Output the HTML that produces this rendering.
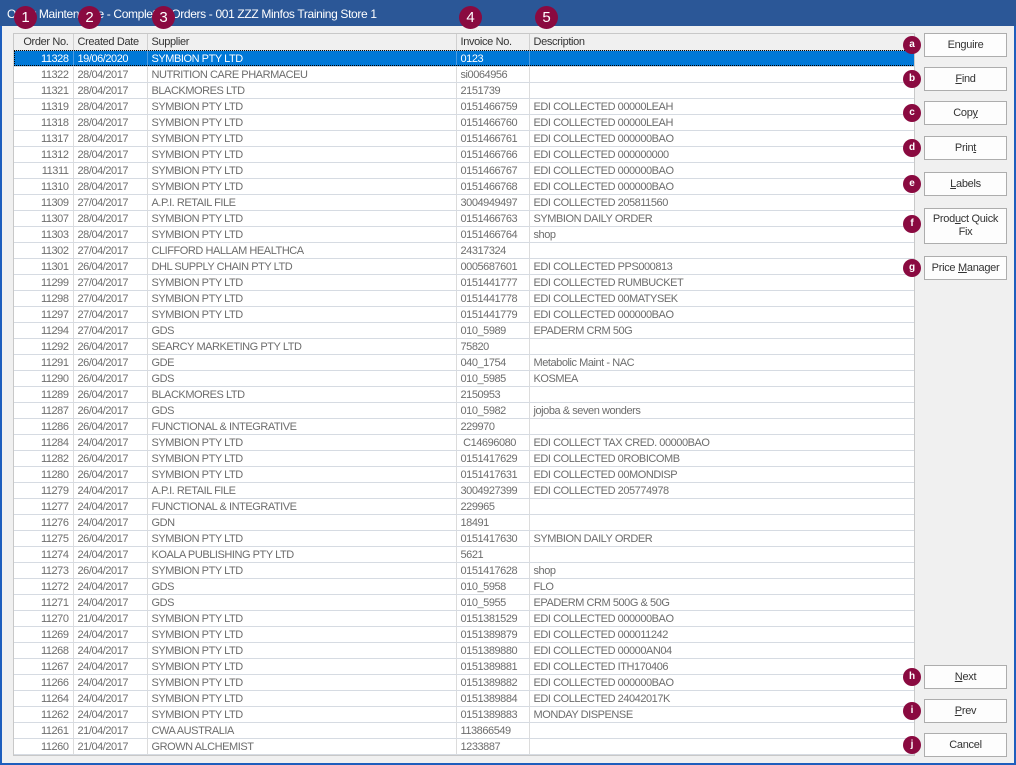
<!DOCTYPE html>
<html><head><style>
*{box-sizing:border-box;margin:0;padding:0}
body{width:1016px;height:765px;overflow:hidden;background:#1e5ebd;font-family:"Liberation Sans",sans-serif;font-size:11px;position:relative}
#title{position:absolute;left:0;top:0;width:1016px;height:26px;background:#2b5797;color:#fff;font-size:12px;letter-spacing:-0.35px;padding:7px 0 0 7px}
#body{position:absolute;left:2px;top:26px;width:1012px;height:737px;background:#f0f0f0}
#grid{position:absolute;left:13px;top:33px;width:902px;height:723px;background:#fff;border:1px solid #c8c8c8;overflow:hidden}
table{border-collapse:collapse;table-layout:fixed;width:901px}
td,th{height:16px;line-height:14px;padding:1px 4px 0 4px;white-space:nowrap;overflow:hidden;color:#6d6d6d;font-weight:normal;text-align:left;border-right:1px solid #dcdcdc;border-bottom:1px solid #d6dbe2;letter-spacing:-0.45px;vertical-align:top}
th{background:#f0f0f0;color:#333;border-bottom:1px solid #c8c8c8;border-right:1px solid #d0d0d0;letter-spacing:-0.35px}
td.n{text-align:right}
tr.sel td{background:#0078d7;color:#fff;border-right-color:#4a9be0}
tr.sel{outline:1px dotted #000;outline-offset:-1px}
.btn{position:absolute;left:924px;width:83px;height:24px;background:#fdfdfd;border:1px solid #adadad;text-align:center;line-height:22px;color:#333;font-size:11px;letter-spacing:-0.3px}
.b{position:absolute;width:18px;height:18px;border-radius:50%;background:#8a0a40;color:#fff;font-weight:bold;font-size:10px;text-align:center;line-height:18px}
.nb{position:absolute;width:23px;height:23px;border-radius:50%;background:#8a0a40;color:#fff;font-size:15px;text-align:center;line-height:23px}
u{text-decoration:underline}
</style></head><body>
<div id="title">Order Maintenance - Completed Orders - 001 ZZZ Minfos Training Store 1</div>
<div id="body"></div>
<div id="grid"><table>
<colgroup><col style="width:59px"><col style="width:74px"><col style="width:309px"><col style="width:73px"><col></colgroup>
<tr><th style="text-align:right">Order No.</th><th>Created Date</th><th>Supplier</th><th>Invoice No.</th><th>Description</th></tr>
<tr class="sel"><td class="n">11328</td><td>19/06/2020</td><td>SYMBION PTY LTD</td><td>0123</td><td></td></tr>
<tr><td class="n">11322</td><td>28/04/2017</td><td>NUTRITION CARE PHARMACEU</td><td>si0064956</td><td></td></tr>
<tr><td class="n">11321</td><td>28/04/2017</td><td>BLACKMORES LTD</td><td>2151739</td><td></td></tr>
<tr><td class="n">11319</td><td>28/04/2017</td><td>SYMBION PTY LTD</td><td>0151466759</td><td>EDI COLLECTED 00000LEAH</td></tr>
<tr><td class="n">11318</td><td>28/04/2017</td><td>SYMBION PTY LTD</td><td>0151466760</td><td>EDI COLLECTED 00000LEAH</td></tr>
<tr><td class="n">11317</td><td>28/04/2017</td><td>SYMBION PTY LTD</td><td>0151466761</td><td>EDI COLLECTED 000000BAO</td></tr>
<tr><td class="n">11312</td><td>28/04/2017</td><td>SYMBION PTY LTD</td><td>0151466766</td><td>EDI COLLECTED 000000000</td></tr>
<tr><td class="n">11311</td><td>28/04/2017</td><td>SYMBION PTY LTD</td><td>0151466767</td><td>EDI COLLECTED 000000BAO</td></tr>
<tr><td class="n">11310</td><td>28/04/2017</td><td>SYMBION PTY LTD</td><td>0151466768</td><td>EDI COLLECTED 000000BAO</td></tr>
<tr><td class="n">11309</td><td>27/04/2017</td><td>A.P.I. RETAIL FILE</td><td>3004949497</td><td>EDI COLLECTED 205811560</td></tr>
<tr><td class="n">11307</td><td>28/04/2017</td><td>SYMBION PTY LTD</td><td>0151466763</td><td>SYMBION DAILY ORDER</td></tr>
<tr><td class="n">11303</td><td>28/04/2017</td><td>SYMBION PTY LTD</td><td>0151466764</td><td>shop</td></tr>
<tr><td class="n">11302</td><td>27/04/2017</td><td>CLIFFORD HALLAM HEALTHCA</td><td>24317324</td><td></td></tr>
<tr><td class="n">11301</td><td>26/04/2017</td><td>DHL SUPPLY CHAIN PTY LTD</td><td>0005687601</td><td>EDI COLLECTED PPS000813</td></tr>
<tr><td class="n">11299</td><td>27/04/2017</td><td>SYMBION PTY LTD</td><td>0151441777</td><td>EDI COLLECTED RUMBUCKET</td></tr>
<tr><td class="n">11298</td><td>27/04/2017</td><td>SYMBION PTY LTD</td><td>0151441778</td><td>EDI COLLECTED 00MATYSEK</td></tr>
<tr><td class="n">11297</td><td>27/04/2017</td><td>SYMBION PTY LTD</td><td>0151441779</td><td>EDI COLLECTED 000000BAO</td></tr>
<tr><td class="n">11294</td><td>27/04/2017</td><td>GDS</td><td>010_5989</td><td>EPADERM CRM 50G</td></tr>
<tr><td class="n">11292</td><td>26/04/2017</td><td>SEARCY MARKETING PTY LTD</td><td>75820</td><td></td></tr>
<tr><td class="n">11291</td><td>26/04/2017</td><td>GDE</td><td>040_1754</td><td>Metabolic Maint - NAC</td></tr>
<tr><td class="n">11290</td><td>26/04/2017</td><td>GDS</td><td>010_5985</td><td>KOSMEA</td></tr>
<tr><td class="n">11289</td><td>26/04/2017</td><td>BLACKMORES LTD</td><td>2150953</td><td></td></tr>
<tr><td class="n">11287</td><td>26/04/2017</td><td>GDS</td><td>010_5982</td><td>jojoba &amp; seven wonders</td></tr>
<tr><td class="n">11286</td><td>26/04/2017</td><td>FUNCTIONAL &amp; INTEGRATIVE</td><td>229970</td><td></td></tr>
<tr><td class="n">11284</td><td>24/04/2017</td><td>SYMBION PTY LTD</td><td>&nbsp;C14696080</td><td>EDI COLLECT TAX CRED. 00000BAO</td></tr>
<tr><td class="n">11282</td><td>26/04/2017</td><td>SYMBION PTY LTD</td><td>0151417629</td><td>EDI COLLECTED 0ROBICOMB</td></tr>
<tr><td class="n">11280</td><td>26/04/2017</td><td>SYMBION PTY LTD</td><td>0151417631</td><td>EDI COLLECTED 00MONDISP</td></tr>
<tr><td class="n">11279</td><td>24/04/2017</td><td>A.P.I. RETAIL FILE</td><td>3004927399</td><td>EDI COLLECTED 205774978</td></tr>
<tr><td class="n">11277</td><td>24/04/2017</td><td>FUNCTIONAL &amp; INTEGRATIVE</td><td>229965</td><td></td></tr>
<tr><td class="n">11276</td><td>24/04/2017</td><td>GDN</td><td>18491</td><td></td></tr>
<tr><td class="n">11275</td><td>26/04/2017</td><td>SYMBION PTY LTD</td><td>0151417630</td><td>SYMBION DAILY ORDER</td></tr>
<tr><td class="n">11274</td><td>24/04/2017</td><td>KOALA PUBLISHING PTY LTD</td><td>5621</td><td></td></tr>
<tr><td class="n">11273</td><td>26/04/2017</td><td>SYMBION PTY LTD</td><td>0151417628</td><td>shop</td></tr>
<tr><td class="n">11272</td><td>24/04/2017</td><td>GDS</td><td>010_5958</td><td>FLO</td></tr>
<tr><td class="n">11271</td><td>24/04/2017</td><td>GDS</td><td>010_5955</td><td>EPADERM CRM 500G &amp; 50G</td></tr>
<tr><td class="n">11270</td><td>21/04/2017</td><td>SYMBION PTY LTD</td><td>0151381529</td><td>EDI COLLECTED 000000BAO</td></tr>
<tr><td class="n">11269</td><td>24/04/2017</td><td>SYMBION PTY LTD</td><td>0151389879</td><td>EDI COLLECTED 000011242</td></tr>
<tr><td class="n">11268</td><td>24/04/2017</td><td>SYMBION PTY LTD</td><td>0151389880</td><td>EDI COLLECTED 00000AN04</td></tr>
<tr><td class="n">11267</td><td>24/04/2017</td><td>SYMBION PTY LTD</td><td>0151389881</td><td>EDI COLLECTED ITH170406</td></tr>
<tr><td class="n">11266</td><td>24/04/2017</td><td>SYMBION PTY LTD</td><td>0151389882</td><td>EDI COLLECTED 000000BAO</td></tr>
<tr><td class="n">11264</td><td>24/04/2017</td><td>SYMBION PTY LTD</td><td>0151389884</td><td>EDI COLLECTED 24042017K</td></tr>
<tr><td class="n">11262</td><td>24/04/2017</td><td>SYMBION PTY LTD</td><td>0151389883</td><td>MONDAY DISPENSE</td></tr>
<tr><td class="n">11261</td><td>21/04/2017</td><td>CWA AUSTRALIA</td><td>113866549</td><td></td></tr>
<tr><td class="n">11260</td><td>21/04/2017</td><td>GROWN ALCHEMIST</td><td>1233887</td><td></td></tr>
</table></div>

<div class="btn" style="top:33px">Enguire</div>
<div class="btn" style="top:67px"><u>F</u>ind</div>
<div class="btn" style="top:101px">Cop<u>y</u></div>
<div class="btn" style="top:136px">Prin<u>t</u></div>
<div class="btn" style="top:172px"><u>L</u>abels</div>
<div class="btn" style="top:208px;height:36px;line-height:13px;padding-top:4px">Prod<u>u</u>ct Quick<br>Fix</div>
<div class="btn" style="top:256px">Price <u>M</u>anager</div>
<div class="btn" style="top:665px"><u>N</u>ext</div>
<div class="btn" style="top:699px"><u>P</u>rev</div>
<div class="btn" style="top:733px">Cancel</div>

<div class="b" style="left:903px;top:36px">a</div>
<div class="b" style="left:903px;top:70px">b</div>
<div class="b" style="left:903px;top:104px">c</div>
<div class="b" style="left:903px;top:139px">d</div>
<div class="b" style="left:903px;top:175px">e</div>
<div class="b" style="left:903px;top:215px">f</div>
<div class="b" style="left:903px;top:259px">g</div>
<div class="b" style="left:903px;top:668px">h</div>
<div class="b" style="left:903px;top:702px">i</div>
<div class="b" style="left:903px;top:736px">j</div>

<div class="nb" style="left:14px;top:6px">1</div>
<div class="nb" style="left:78px;top:6px">2</div>
<div class="nb" style="left:152px;top:6px">3</div>
<div class="nb" style="left:459px;top:6px">4</div>
<div class="nb" style="left:535px;top:6px">5</div>
</body></html>
